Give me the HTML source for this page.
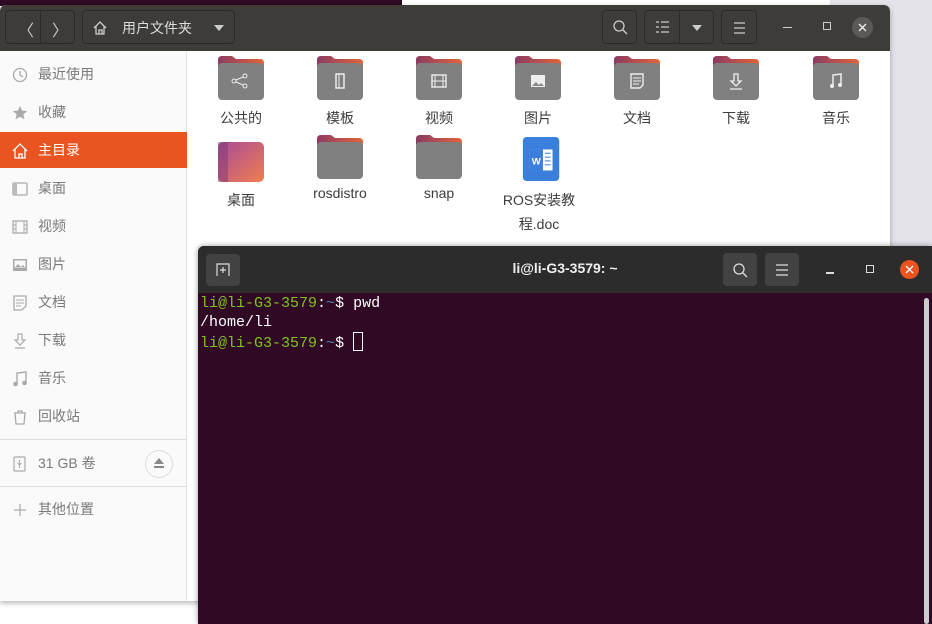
<!DOCTYPE html>
<html><head><meta charset="utf-8"><style>
*{margin:0;padding:0;box-sizing:border-box}
body{width:932px;height:624px;overflow:hidden;background:#fff;position:relative;font-family:"Liberation Sans","Noto Sans CJK SC",sans-serif}
.abs{position:absolute}
.fm{left:0;top:5px;width:890px;height:596px;background:#fff;box-shadow:0 2px 6px rgba(0,0,0,.3);border-radius:6px 6px 0 0;overflow:hidden}
.hdr{left:0;top:0;width:890px;height:46px;background:#3d3c38}
.btn{position:absolute;border:1px solid #2a2a28;border-radius:4px;background:#3d3c38}
.side{left:0;top:46px;width:187px;height:550px;background:#fafafa;border-right:1px solid #e2e2e2}
.it{position:absolute;left:0;width:187px;height:36px;font-size:14px;color:#7a7a7a;line-height:36px;padding-left:38px}
.it svg{position:absolute;left:12px;top:11px}
.fold{position:absolute;width:46px;height:44px}
.lbl{position:absolute;width:90px;text-align:center;font-size:14px;color:#3c3c3c}
.term{left:198px;top:246px;width:734px;height:378px;background:#300a24;border-radius:6px 0 0 0;overflow:hidden;box-shadow:0 0 6px rgba(0,0,0,.4)}
.th{left:0;top:0;width:734px;height:47px;background:#2c2c2c}
.tb{position:absolute;background:#424242;border-radius:4px}
.mono{font-family:"Liberation Mono","DejaVu Sans Mono",monospace;font-size:15px;line-height:18.5px;color:#fff;white-space:pre}
.g{color:#7fc31c}.b{color:#5c7fbf}
</style></head><body>
<div class="abs" style="left:0;top:0;width:402px;height:6px;background:#300a24"></div>
<div class="abs" style="left:830px;top:0;width:102px;height:246px;background:#e4e3ea"></div>

<div class="abs fm">
 <div class="abs hdr">
  <div class="btn" style="left:5px;top:5px;width:70px;height:34px"><div style="position:absolute;left:34px;top:0;width:1px;height:32px;background:#2a2a28"></div>
   <span style="position:absolute;left:12px;top:6px;color:#ccc;font-size:16px">〈</span><span style="position:absolute;left:46px;top:6px;color:#ccc;font-size:16px">〉</span></div>
  <div class="btn" style="left:82px;top:5px;width:153px;height:34px">
   <svg style="position:absolute;left:9px;top:10px" width="16" height="14" viewBox="0 0 16 14"><path d="M2 7L8 1l6 6M4 5v8h8V5M7 13V9h3v4" fill="none" stroke="#ccc" stroke-width="1.3"/></svg>
   <span style="position:absolute;left:39px;top:7px;color:#ddd;font-size:14px">用户文件夹</span>
   <div style="position:absolute;left:131px;top:14px;border:5px solid transparent;border-top:6px solid #ccc"></div></div>
  <div class="btn" style="left:602px;top:5px;width:35px;height:34px"><svg style="position:absolute;left:9px;top:8px" width="16" height="16"><circle cx="7" cy="7" r="5" fill="none" stroke="#ccc" stroke-width="1.3"/><path d="M11 11l4 4" stroke="#ccc" stroke-width="1.3"/></svg></div>
  <div class="btn" style="left:644px;top:5px;width:70px;height:34px"><div style="position:absolute;left:34px;top:0;width:1px;height:32px;background:#2a2a28"></div>
   <svg style="position:absolute;left:11px;top:10px" width="14" height="12"><path d="M0 1h3M0 6h3M0 11h3M5 1h8M5 6h8M5 11h8" stroke="#ccc" stroke-width="1.3"/></svg>
   <div style="position:absolute;left:47px;top:14px;border:5px solid transparent;border-top:6px solid #ccc"></div></div>
  <div class="btn" style="left:721px;top:5px;width:36px;height:34px"><svg style="position:absolute;left:11px;top:11px" width="14" height="12"><path d="M1 1h11M1 6h11M1 11h11" stroke="#ccc" stroke-width="1.2"/></svg></div>
  <div class="abs" style="left:783px;top:22px;width:9px;height:1px;background:#ccc"></div>
  <div class="abs" style="left:823px;top:17px;width:8px;height:8px;border:1.3px solid #ccc"></div>
  <div class="abs" style="left:852px;top:12px;width:21px;height:21px;border-radius:50%;background:#5a5955"><svg style="position:absolute;left:6px;top:6px" width="9" height="9"><path d="M1 1l7 7M8 1l-7 7" stroke="#eee" stroke-width="1.4"/></svg></div>
 </div>
 <div class="abs side">
  <div class="it" style="top:5px"><svg width="16" height="16"><circle cx="8" cy="8" r="6.5" fill="none" stroke="#aaa" stroke-width="1.3"/><path d="M8 4v4l3 2" fill="none" stroke="#aaa" stroke-width="1.3"/></svg>最近使用</div>
  <div class="it" style="top:43px"><svg width="16" height="16"><path d="M8 1l2.1 4.5 4.9.6-3.6 3.3 1 4.8L8 11.8 3.6 14.2l1-4.8L1 6.1l4.9-.6z" fill="#aaa"/></svg>收藏</div>
  <div class="it" style="top:81px;background:#e95420;color:#fff"><svg width="16" height="16"><path d="M1 8L8 1l7 7M3 6v9h10V6M7 15v-4h3v4" fill="none" stroke="#fff" stroke-width="1.3"/></svg>主目录</div>
  <div class="it" style="top:119px"><svg width="16" height="16"><rect x="1" y="2" width="14" height="12" rx="1" fill="none" stroke="#aaa" stroke-width="1.3"/><rect x="1" y="2" width="4" height="12" fill="#bbb"/></svg>桌面</div>
  <div class="it" style="top:157px"><svg width="16" height="16"><rect x="1" y="2" width="14" height="12" fill="none" stroke="#aaa" stroke-width="1.3"/><path d="M4 2v12M12 2v12M1 6h3M1 10h3M12 6h3M12 10h3" stroke="#aaa"/></svg>视频</div>
  <div class="it" style="top:195px"><svg width="16" height="16"><rect x="1" y="2" width="14" height="12" fill="#aaa"/><rect x="2.5" y="3.5" width="11" height="7" fill="#fafafa"/><path d="M3 10l3-3 3 3 2-2 2 2z" fill="#aaa"/></svg>图片</div>
  <div class="it" style="top:233px"><svg width="16" height="16"><path d="M2 1h12v10l-4 4H2z" fill="none" stroke="#aaa" stroke-width="1.3"/><path d="M4 5h8M4 8h8M4 11h5" stroke="#aaa"/></svg>文档</div>
  <div class="it" style="top:271px"><svg width="16" height="16"><path d="M6 1h4v6h3l-5 5-5-5h3zM3 15h10" fill="none" stroke="#aaa" stroke-width="1.2"/></svg>下载</div>
  <div class="it" style="top:309px"><svg width="16" height="16"><path d="M5 13V2l9-1v11" fill="none" stroke="#aaa" stroke-width="1.4"/><circle cx="3.5" cy="13" r="2.3" fill="#aaa"/><circle cx="12.5" cy="12" r="2.3" fill="#aaa"/></svg>音乐</div>
  <div class="it" style="top:347px"><svg width="16" height="16"><path d="M2 4h12M6 4V2h4v2M3 4l1 11h8l1-11" fill="none" stroke="#aaa" stroke-width="1.3"/></svg>回收站</div>
  <div class="abs" style="left:0;top:388px;width:187px;height:1px;background:#ddd"></div>
  <div class="it" style="top:394px"><svg width="16" height="16"><rect x="2" y="1" width="11" height="14" rx="1" fill="none" stroke="#aaa" stroke-width="1.2"/><path d="M7.5 4v8M5.5 7l2 2 2-2" fill="none" stroke="#aaa"/></svg>31 GB 卷</div>
  <div class="abs" style="left:145px;top:399px;width:28px;height:28px;border-radius:50%;border:1px solid #ddd"><div style="position:absolute;left:8px;top:7px;border:5px solid transparent;border-bottom:6px solid #888;border-top:0"></div><div style="position:absolute;left:8px;top:15px;width:10px;height:2px;background:#888"></div></div>
  <div class="abs" style="left:0;top:435px;width:187px;height:1px;background:#ddd"></div>
  <div class="it" style="top:440px"><svg width="16" height="16"><path d="M8 2v12M2 8h12" stroke="#aaa" stroke-width="1.2"/></svg>其他位置</div>
 </div>
 <svg width="0" height="0" style="position:absolute"><defs>
  <linearGradient id="ft" x1="0" x2="1"><stop offset="0" stop-color="#8b3b63"/><stop offset="1" stop-color="#e2643a"/></linearGradient>
  <linearGradient id="dk" x1="0" y1="0" x2="1" y2="1"><stop offset="0" stop-color="#a64b9a"/><stop offset="1" stop-color="#f07e4e"/></linearGradient>
 </defs></svg>
</div>
<div id="icons"></div>
<script>
var items=[[218,56,"公共的",'<circle cx="16" cy="25" r="2" fill="none" stroke="#eee"/><circle cx="27" cy="20" r="2" fill="none" stroke="#eee"/><circle cx="27" cy="30" r="2" fill="none" stroke="#eee"/><path d="M18 24l7-3M18 26l7 3" stroke="#eee"/>'],
[317,56,"模板",'<rect x="19" y="18" width="8" height="14" fill="none" stroke="#eee" stroke-width="1.5"/><path d="M22 18v14" stroke="#eee"/>'],
[416,56,"视频",'<rect x="16" y="19" width="14" height="12" fill="none" stroke="#eee" stroke-width="1.4"/><path d="M19 19v12M27 19v12M16 25h14" stroke="#eee"/>'],
[515,56,"图片",'<rect x="16" y="19" width="14" height="12" fill="#eee"/><path d="M17 30l4-4 3 3 2-2 3 3z" fill="#888"/>'],
[614,56,"文档",'<path d="M17 18h12v11l-3 3h-9z" fill="none" stroke="#eee" stroke-width="1.4"/><path d="M19 22h8M19 25h8M19 28h6" stroke="#eee"/>'],
[713,56,"下载",'<path d="M21 18h4v7h3l-5 5-5-5h3zM17 33h12" fill="none" stroke="#eee" stroke-width="1.3"/>'],
[813,56,"音乐",'<path d="M20 30V19l8-1v11" fill="none" stroke="#eee" stroke-width="1.5"/><circle cx="19" cy="30" r="2" fill="#eee"/><circle cx="27" cy="29" r="2" fill="#eee"/>'],
[317,135,"rosdistro",""],[416,135,"snap",""]];
var h="";
items.forEach(function(a){
 h+='<svg class="fold" style="left:'+a[0]+'px;top:'+a[1]+'px" viewBox="0 0 46 44"><path d="M0 4q0-4 4-4h10l4 3h24q4 0 4 4v6H0z" fill="url(#ft)"/><rect x="0" y="7" width="46" height="37" rx="4" fill="#808080"/>'+a[3]+'</svg>';
 var ty=a[1]+(a[3]?52:50);
 h+='<div class="lbl" style="left:'+(a[0]-22)+'px;top:'+ty+'px">'+a[2]+'</div>';
});
h+='<svg class="fold" style="left:218px;top:140px" viewBox="0 0 46 40"><rect width="46" height="40" rx="5" fill="url(#dk)"/><rect width="10" height="40" fill="#7f3a74" opacity=".5"/></svg><div class="lbl" style="left:196px;top:190px">桌面</div>';
h+='<svg class="fold" style="left:519px;top:137px" viewBox="0 0 40 46" width="40" height="46"><rect x="0" y="0" width="38" height="46" rx="4" fill="#3b7fdc"/><rect x="7" y="13" width="24" height="22" fill="#fff"/><rect x="7" y="13" width="14" height="22" fill="#3b7fdc"/><text x="14" y="29" font-size="10" font-weight="bold" fill="#fff" text-anchor="middle" font-family="Liberation Sans">W</text><path d="M23 17h6M23 21h6M23 25h6M23 29h6" stroke="#3b7fdc"/></svg>';
h+='<div class="lbl" style="left:494px;top:188px;line-height:24px">ROS安装教<br>程.doc</div>';
document.getElementById("icons").innerHTML=h;
</script>

<div class="abs term">
 <div class="abs th">
  <div class="tb" style="left:8px;top:8px;width:34px;height:32px"><svg style="position:absolute;left:10px;top:9px" width="14" height="14"><path d="M1 13V1h12v12M7 4v6M4 7h6" fill="none" stroke="#ddd" stroke-width="1.2"/></svg></div>
  <div class="abs" style="left:0;top:14px;width:734px;text-align:center;color:#eee;font-size:14px;font-weight:bold">li@li-G3-3579: ~</div>
  <div class="tb" style="left:525px;top:7px;width:34px;height:33px"><svg style="position:absolute;left:9px;top:9px" width="16" height="16"><circle cx="7" cy="7" r="5" fill="none" stroke="#ddd" stroke-width="1.3"/><path d="M11 11l4 4" stroke="#ddd" stroke-width="1.3"/></svg></div>
  <div class="tb" style="left:567px;top:7px;width:34px;height:33px"><svg style="position:absolute;left:11px;top:11px" width="12" height="12"><path d="M0 1h12M0 6h12M0 11h12" stroke="#ddd" stroke-width="1.2"/></svg></div>
  <div class="abs" style="left:628px;top:26px;width:8px;height:1.5px;background:#ddd"></div>
  <div class="abs" style="left:668px;top:19px;width:8px;height:8px;border:1.3px solid #ddd"></div>
  <div class="abs" style="left:702px;top:14px;width:19px;height:19px;border-radius:50%;background:#e95420"><svg style="position:absolute;left:5px;top:5px" width="9" height="9"><path d="M1 1l7 7M8 1l-7 7" stroke="#fff" stroke-width="1.3"/></svg></div>
 </div>
 <div class="abs mono" style="left:2px;top:49px"><span class="g">li@li-G3-3579</span>:<span class="b">~</span>$ pwd
/home/li
<span class="g">li@li-G3-3579</span>:<span class="b">~</span>$ <span style="display:inline-block;width:10px;height:19px;border:1px solid #fff;vertical-align:-4px"></span></div>
 <div class="abs" style="left:726px;top:52px;width:5px;height:326px;background:#ccc;border-radius:3px"></div>
</div>
</body></html>
